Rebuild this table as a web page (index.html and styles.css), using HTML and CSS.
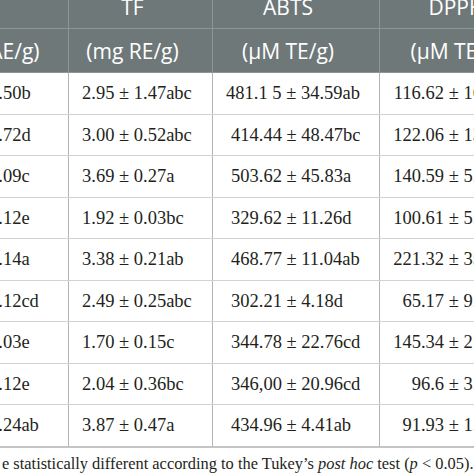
FILE: index.html
```html
<!DOCTYPE html>
<html lang="en">
<head>
    <meta charset="UTF-8">
    <meta name="viewport" content="width=device-width, initial-scale=1.0">
    <title>Antioxidant Table</title>
    <link rel="stylesheet" href="styles.css">
</head>
<body>
    <div class="frame">
        <table class="data">
            <colgroup>
                <col class="c-tp">
                <col class="c-tf">
                <col class="c-abts">
                <col class="c-dpph">
            </colgroup>
            <thead>
                <tr>
                    <th>TP</th>
                    <th>TF</th>
                    <th>ABTS</th>
                    <th>DPPH</th>
                </tr>
                <tr>
                    <th>(mg GAE/g)</th>
                    <th>(mg RE/g)</th>
                    <th>(μM TE/g)</th>
                    <th>(μM TE/g)</th>
                </tr>
            </thead>
            <tbody>
                <tr>
                    <td class="tp">28.46 ± 1.50b</td>
                    <td class="tf">2.95 ± 1.47abc</td>
                    <td class="abts first">481.1 5 ± 34.59ab</td>
                    <td class="dpph"><span class="mean">116.62</span> ± 16.07b</td>
                </tr>
                <tr>
                    <td class="tp">19.83 ± 0.72d</td>
                    <td class="tf">3.00 ± 0.52abc</td>
                    <td class="abts">414.44 ± 48.47bc</td>
                    <td class="dpph"><span class="mean">122.06</span> ± 13.54b</td>
                </tr>
                <tr>
                    <td class="tp">22.37 ± 1.09c</td>
                    <td class="tf">3.69 ± 0.27a</td>
                    <td class="abts">503.62 ± 45.83a</td>
                    <td class="dpph"><span class="mean">140.59</span> ± 5.21b</td>
                </tr>
                <tr>
                    <td class="tp">15.64 ± 0.12e</td>
                    <td class="tf">1.92 ± 0.03bc</td>
                    <td class="abts">329.62 ± 11.26d</td>
                    <td class="dpph"><span class="mean">100.61</span> ± 5.72bc</td>
                </tr>
                <tr>
                    <td class="tp">31.25 ± 2.14a</td>
                    <td class="tf">3.38 ± 0.21ab</td>
                    <td class="abts">468.77 ± 11.04ab</td>
                    <td class="dpph"><span class="mean">221.32</span> ± 35.17a</td>
                </tr>
                <tr>
                    <td class="tp">20.18 ± 1.12cd</td>
                    <td class="tf">2.49 ± 0.25abc</td>
                    <td class="abts">302.21 ± 4.18d</td>
                    <td class="dpph"><span class="mean">65.17</span> ± 9.02c</td>
                </tr>
                <tr>
                    <td class="tp">14.92 ± 0.03e</td>
                    <td class="tf">1.70 ± 0.15c</td>
                    <td class="abts">344.78 ± 22.76cd</td>
                    <td class="dpph"><span class="mean">145.34</span> ± 21.68b</td>
                </tr>
                <tr>
                    <td class="tp">16.05 ± 0.12e</td>
                    <td class="tf">2.04 ± 0.36bc</td>
                    <td class="abts">346,00 ± 20.96cd</td>
                    <td class="dpph"><span class="mean">96.6</span> ± 3.25bc</td>
                </tr>
                <tr>
                    <td class="tp">29.71 ± 1.24ab</td>
                    <td class="tf">3.87 ± 0.47a</td>
                    <td class="abts">434.96 ± 4.41ab</td>
                    <td class="dpph"><span class="mean">91.93</span> ± 1.19bc</td>
                </tr>
            </tbody>
        </table>
    </div>
    <p class="note">e statistically different according to the Tukey’s <i>post hoc</i> test (<i>p</i> &lt; 0.05).</p>
</body>
</html>
```

FILE: styles.css
```css
body {
    margin: 0;
    width: 474px;
    height: 474px;
    overflow: hidden;
    background: #fff;
}
.frame {
    margin: -16px 0 0 -82px;
}
.data {
    border-collapse: collapse;
    table-layout: fixed;
    width: 631px;
}
.c-tp { width: 150px; }
.c-tf { width: 144px; }
.c-abts { width: 167px; }
.c-dpph { width: 170px; }

.data th {
    background: #6e7879;
    color: #fff;
    font-family: "Open Sans", sans-serif;
    font-weight: 400;
    font-size: 21px;
    line-height: 24px;
    height: 43px;
    padding: 0 16px 0 0;
    text-align: center;
    border: 1px solid #8d9697;
}
.data td {
    height: 40.5px;
    padding: 0;
    font-family: "Liberation Serif", serif;
    font-size: 18.5px;
    line-height: 22px;
    color: #231f20;
    white-space: nowrap;
    border-top: 1px solid #d2d2d2;
    border-bottom: 1px solid #d2d2d2;
    border-left: 1px solid #b4b4b4;
    border-right: 1px solid #b4b4b4;
}
.data tbody tr:last-child td {
    border-bottom: 2px solid #c4c4c4;
}
.tp { padding-left: 9px !important; }
.tf { padding-left: 13px !important; }
.abts { padding-left: 18px !important; }
.abts.first { padding-left: 13px !important; }
.dpph { padding-left: 12px !important; }
.mean {
    display: inline-block;
    width: 52px;
    text-align: right;
}
.note {
    margin: 5px 0 0 2px;
    font-family: "Liberation Serif", serif;
    font-size: 16.4px;
    line-height: 22px;
    color: #231f20;
    white-space: nowrap;
}
```
